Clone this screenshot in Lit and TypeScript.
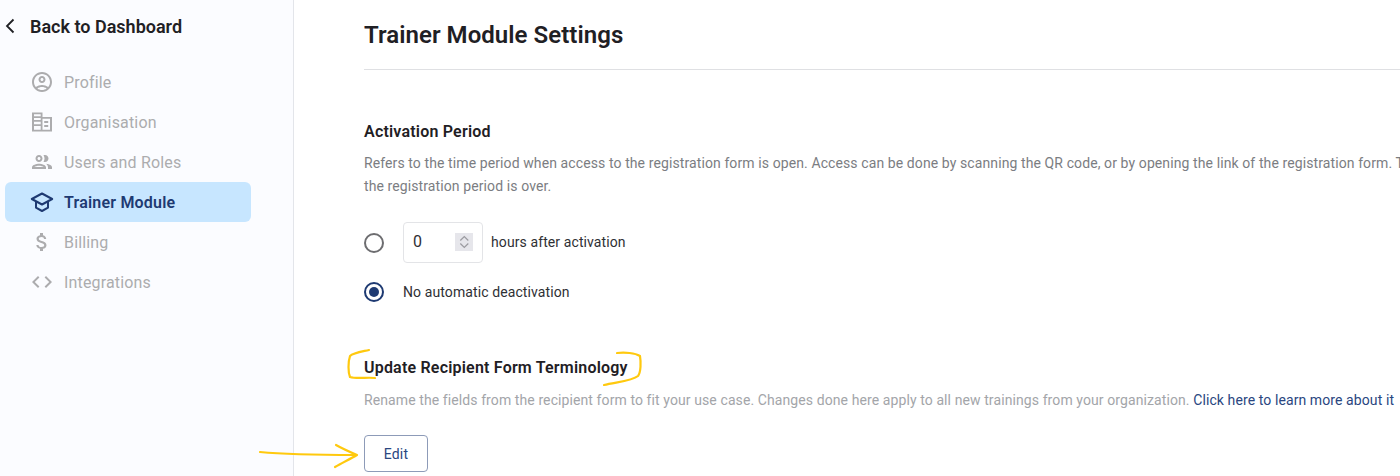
import { LitElement, html, css, svg } from "lit";
import { customElement } from "lit/decorators.js";

const ICONS: Record<string, unknown> = {
  profile: svg`<path d="M12 2C6.48 2 2 6.48 2 12s4.48 10 10 10 10-4.48 10-10S17.52 2 12 2zM7.35 18.5C8.66 17.56 10.26 17 12 17s3.34.56 4.65 1.5C15.34 19.44 13.74 20 12 20s-3.34-.56-4.65-1.5zm10.79-1.38C16.45 15.8 14.32 15 12 15s-4.45.8-6.14 2.12C4.7 15.73 4 13.95 4 12c0-4.42 3.58-8 8-8s8 3.58 8 8c0 1.95-.7 3.73-1.86 5.12z"/><path d="M12 6c-1.93 0-3.5 1.57-3.5 3.5S10.07 13 12 13s3.5-1.57 3.5-3.5S13.93 6 12 6zm0 5c-.83 0-1.5-.67-1.5-1.5S11.17 8 12 8s1.5.67 1.5 1.5S12.83 11 12 11z"/>`,
  org: svg`<path fill-rule="evenodd" d="M2 2.500h10.500V7H22v14.500H2zM4 4.300v1.900h6.700V4.300zM4 8v2h6.700V8zM4 11.800v2.400h6.700v-2.400zM4 16v3.700h6.700V16zM12.500 8.800v10.900H20V8.800zM14.200 11h4v2h-4zM14.200 15h4v2h-4z"/>`,
  users: svg`<path d="M9 13.750c-2.340 0-7 1.170-7 3.500V19h14v-1.750c0-2.330-4.660-3.500-7-3.500zM4.340 17c.84-.58 2.870-1.250 4.660-1.250s3.820.67 4.660 1.250H4.340zM9 12c1.930 0 3.500-1.570 3.500-3.500S10.930 5 9 5 5.500 6.570 5.500 8.500 7.070 12 9 12zm0-5c.83 0 1.500.67 1.500 1.500S9.830 10 9 10s-1.500-.67-1.500-1.500S8.170 7 9 7zm7.040 6.810c1.160.84 1.960 1.960 1.960 3.440V19h4v-1.750c0-2.020-3.500-3.170-5.960-3.440zM15 12c1.930 0 3.500-1.570 3.500-3.500S16.930 5 15 5c-.54 0-1.040.13-1.500.35.630.89 1 1.980 1 3.150s-.37 2.260-1 3.150c.46.220.96.350 1.500.350z"/>`,
  dollar: svg`<path d="M11.800 10.900c-2.270-.59-3-1.200-3-2.150 0-1.090 1.010-1.850 2.700-1.850 1.780 0 2.440.85 2.500 2.100h2.210c-.07-1.720-1.120-3.300-3.210-3.810V3h-3v2.160c-1.940.42-3.500 1.680-3.500 3.610 0 2.310 1.910 3.460 4.700 4.130 2.500.6 3 1.480 3 2.410 0 .69-.49 1.790-2.700 1.790-2.060 0-2.870-.92-2.980-2.100h-2.200c.12 2.190 1.760 3.420 3.680 3.830V21h3v-2.150c1.950-.37 3.500-1.500 3.500-3.550 0-2.840-2.430-3.810-4.700-4.400z"/>`,
  code: svg`<path d="M9.400 16.600 4.800 12l4.600-4.600L8 6l-6 6 6 6 1.400-1.400zm5.200 0 4.600-4.600-4.600-4.600L16 6l6 6-6 6-1.400-1.400z"/>`,
};

const CAP = svg`<path d="M12 3.500 1.800 9 12 14.500 22.200 9z" fill="none" stroke="currentColor" stroke-width="2" stroke-linejoin="round"/><path d="M6 11.500v6.200l6 3.300 6-3.300v-6.200" fill="none" stroke="currentColor" stroke-width="2" stroke-linejoin="round"/>`;

const NAV = [
  { label: "Profile", icon: "profile" },
  { label: "Organisation", icon: "org" },
  { label: "Users and Roles", icon: "users" },
  { label: "Trainer Module", icon: "cap", active: true },
  { label: "Billing", icon: "dollar" },
  { label: "Integrations", icon: "code" },
];

@customElement("app-root")
export class AppRoot extends LitElement {
  static styles = css`
    :host {
      display: block;
      position: relative;
      width: 1400px;
      height: 476px;
      overflow: hidden;
      background: #fff;
      font-family: Roboto, "Liberation Sans", sans-serif;
    }
    .page { display: flex; height: 476px; }
    .side {
      flex: none;
      box-sizing: border-box;
      width: 294px;
      background: #fbfcff;
      border-right: 1px solid #e3e5ea;
      padding: 14px 0 0 5px;
    }
    .back { display: flex; align-items: center; height: 24px; color: #1f2024; font-size: 18px; font-weight: 600; }
    .back svg { width: 10px; height: 16px; margin-right: 15px; flex: none; }
    .nav { display: flex; flex-direction: column; margin-top: 24px; width: 246px; }
    .item {
      display: flex; align-items: center; height: 40px; box-sizing: border-box;
      padding-left: 25px; gap: 10px; color: #acacae; font-size: 16px; border-radius: 6px; letter-spacing: 0.16px;
    }
    .item svg { width: 24px; height: 24px; fill: currentColor; flex: none; }
    .item.active { background: #c7e6ff; color: #1e3a72; font-weight: 600; letter-spacing: 0.2px; }
    .main { flex: 1; min-width: 0; padding: 0 0 0 70px; overflow: hidden; }
    h1 { margin: 0; font-size: 24px; font-weight: 600; line-height: 28px; color: #1f2024; padding: 21px 0 20px; border-bottom: 1px solid #dfe0e3; letter-spacing: 0.05px; }
    h2 { margin: 0; font-size: 16px; font-weight: 600; line-height: 20px; color: #1f2024; letter-spacing: 0.2px; }
    .s1 { margin-top: 52px; }
    p { margin: 10px 0 0; font-size: 14px; line-height: 23px; color: #7b7d82; letter-spacing: 0.1px; white-space: nowrap; }
    .opt { display: flex; align-items: center; font-size: 14px; color: #2f3034; letter-spacing: 0.1px; }
    .o1 { margin-top: 24px; height: 41px; }
    .o2 { margin-top: 9px; height: 40px; }
    .radio { flex: none; width: 20px; height: 20px; box-sizing: border-box; border-radius: 50%; border: 2px solid #6d6d70; margin-right: 19px; }
    .radio.on { border-color: #1e3a72; display: flex; align-items: center; justify-content: center; }
    .radio.on::after { content: ""; width: 10px; height: 10px; border-radius: 50%; background: #1e3a72; }
    .num {
      box-sizing: border-box; width: 80px; height: 41px; border: 1px solid #e3e4e7; border-radius: 4px;
      display: flex; align-items: center; justify-content: space-between; padding: 0 9px 2px 9px; margin-right: 8px;
      font-size: 16px; color: #2f3034;
    }
    .hours { padding-bottom: 1px; }
    .spin { width: 18px; height: 18px; background: #e6e6eb; display: block; }
    .s2 { margin-top: 46px; position: relative; }
    .s2 p { margin-top: 11px; line-height: 22px; color: #a3a5a9; letter-spacing: 0.095px; }
    .s2 a { color: #2a4680; text-decoration: none; }
    .btn {
      display: flex; align-items: center; justify-content: center; box-sizing: border-box;
      margin-top: 24px; width: 64px; height: 37px; border: 1px solid #8d9bb8; border-radius: 4px;
      color: #2a4680; font-size: 14px; letter-spacing: 0.2px; background: #fff;
    }
    .ink { position: absolute; left: 0; top: 0; width: 1400px; height: 476px; pointer-events: none; }
    .ink path { fill: none; stroke: #ffc90e; stroke-width: 2.200; stroke-linecap: round; stroke-linejoin: round; }
  `;

  render() {
    return html`
      <div class="page">
        <aside class="side">
          <div class="back">
            <svg viewBox="0 0 10 16"><path d="M8.500 1.500 2 8l6.500 6.500" fill="none" stroke="#1f2024" stroke-width="1.800"/></svg>
            Back to Dashboard
          </div>
          <nav class="nav">
            ${NAV.map(
              (n) => html`<div class="item ${n.active ? "active" : ""}">
                <svg viewBox="0 0 24 24">${n.icon === "cap" ? CAP : ICONS[n.icon]}</svg>${n.label}
              </div>`
            )}
          </nav>
        </aside>
        <main class="main">
          <h1>Trainer Module Settings</h1>
          <section class="s1">
            <h2>Activation Period</h2>
            <p>Refers to the time period when access to the registration form is open. Access can be done by scanning the QR code, or by opening the link of the registration form. T<br />the registration period is over.</p>
            <div class="opt o1">
              <span class="radio"></span>
              <div class="num">0
                <svg class="spin" viewBox="0 0 18 18"><path d="M5.300 7.500 9.300 3.500l4 4M5.300 10.500l4 4 4-4" fill="none" stroke="#9b9ba0" stroke-width="1.200"/></svg>
              </div>
              <span class="hours">hours after activation</span>
            </div>
            <div class="opt o2"><span class="radio on"></span>No automatic deactivation</div>
          </section>
          <section class="s2">
            <h2>Update Recipient Form Terminology</h2>
            <p>Rename the fields from the recipient form to fit your use case. Changes done here apply to all new trainings from your organization. <a>Click here to learn more about it</a></p>
            <div class="btn">Edit</div>
          </section>
        </main>
      </div>
      <svg class="ink" viewBox="0 0 1400 476">
        <path d="M369 350 C360 352 353 353 350 356 C348 362 348 372 350 377 C356 379 368 377 375 378"/>
        <path d="M617 353 C625 352 635 353 640 356 C641 362 641 372 638 376 C632 381 616 382 604 385"/>
        <path d="M260 452 C290 455 325 455 356 455"/>
        <path d="M336 445 C343 449 350 452 357 455 C350 459 342 463 335 467"/>
      </svg>
    `;
  }
}
